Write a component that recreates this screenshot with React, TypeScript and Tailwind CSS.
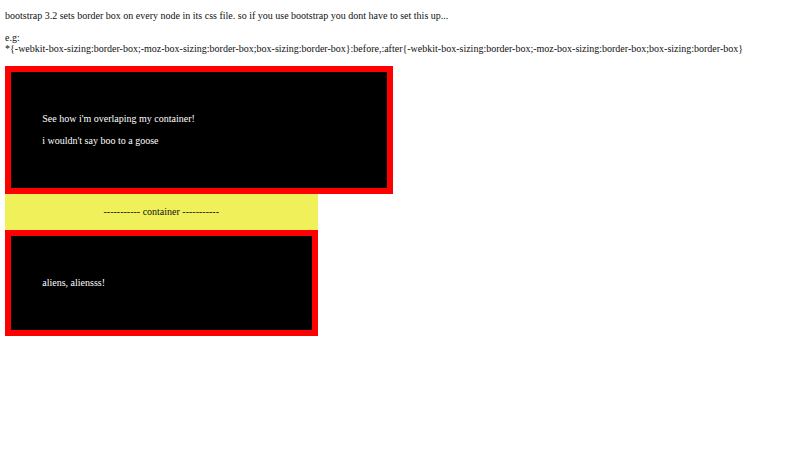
export default function App() {
  return (
    <div className="min-h-screen bg-white px-[5px] pt-[10px] font-['Liberation_Serif',serif] text-[10px] leading-[11.5px] text-[#111]">
      <p>bootstrap 3.2 sets border box on every node in its css file. so if you use bootstrap you dont have to set this up...</p>
      <p className="mt-[10px]">
        e.g:
        <br />
        {"*{-webkit-box-sizing:border-box;-moz-box-sizing:border-box;box-sizing:border-box}:before,:after{-webkit-box-sizing:border-box;-moz-box-sizing:border-box;box-sizing:border-box}"}
      </p>

      {/* container */}
      <div className="mt-[11.5px] w-[312.5px]">
        {/* content-box: overflows the container */}
        <div className="flex w-[387.5px] flex-col gap-[10px] border-[6.25px] border-[#ff0000] bg-black px-[31.25px] py-[41.25px] text-white">
          <p>See how i'm overlaping my container!</p>
          <p>i wouldn't say boo to a goose</p>
        </div>
        <div className="flex h-[36px] items-center justify-center bg-[#f0f05a] text-[#111]">
          ----------- container -----------
        </div>
        {/* border-box: fits */}
        <div className="flex h-[106px] flex-col border-[6.25px] border-[#ff0000] bg-black px-[31.25px] py-[41.25px] text-white">
          <p>aliens, aliensss!</p>
        </div>
      </div>
    </div>
  );
}
